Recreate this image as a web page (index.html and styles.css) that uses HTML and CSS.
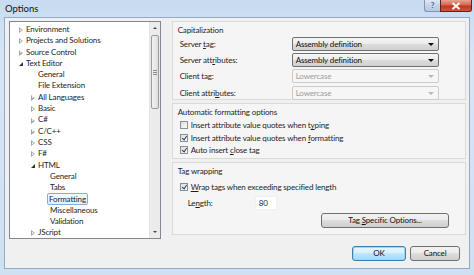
FILE: index.html
```html
<!doctype html>
<html lang="en">

<head>
	<meta charset="utf-8">
	<title>Options</title>
	<link rel="stylesheet" href="styles.css">
</head>

<body>
	<div class="window">
		<div class="titlebar">
			<span class="title">Options</span>
			<div class="caption-buttons">
				<div class="cap-help">?</div>
				<div class="cap-close">
					<svg width="10" height="8" viewBox="0 0 10 8"><path d="M1.5 1 L8.5 7 M8.5 1 L1.5 7" stroke="#fff" stroke-width="2" /></svg>
				</div>
			</div>
		</div>
		<div class="client">
			<div class="main">
				<div class="tree">
					<div class="tree-items">
						<div class="node l0"><span class="tw closed"></span><span>Environment</span></div>
						<div class="node l0"><span class="tw closed"></span><span>Projects and Solutions</span></div>
						<div class="node l0"><span class="tw closed"></span><span>Source Control</span></div>
						<div class="node l0"><span class="tw open"></span><span>Text Editor</span></div>
						<div class="node l1"><span class="tw"></span><span>General</span></div>
						<div class="node l1"><span class="tw"></span><span>File Extension</span></div>
						<div class="node l1"><span class="tw closed"></span><span>All Languages</span></div>
						<div class="node l1"><span class="tw closed"></span><span>Basic</span></div>
						<div class="node l1"><span class="tw closed"></span><span>C#</span></div>
						<div class="node l1"><span class="tw closed"></span><span>C/C++</span></div>
						<div class="node l1"><span class="tw closed"></span><span>CSS</span></div>
						<div class="node l1"><span class="tw closed"></span><span>F#</span></div>
						<div class="node l1"><span class="tw open"></span><span>HTML</span></div>
						<div class="node l2"><span class="tw"></span><span>General</span></div>
						<div class="node l2"><span class="tw"></span><span>Tabs</span></div>
						<div class="node l2"><span class="tw"></span><span class="selected">Formatting</span></div>
						<div class="node l2"><span class="tw"></span><span>Miscellaneous</span></div>
						<div class="node l2"><span class="tw"></span><span>Validation</span></div>
						<div class="node l1"><span class="tw closed"></span><span>JScript</span></div>
					</div>
					<div class="vscroll">
						<div class="sb-arrow up"></div>
						<div class="sb-track">
							<div class="sb-thumb"><span class="grip"></span></div>
						</div>
						<div class="sb-arrow down"></div>
					</div>
				</div>

				<div class="pages">
					<div class="group g-caps">
						<div class="group-head">Capitalization</div>
						<div class="field">
							<span class="label">Server <u>t</u>ag:</span>
							<div class="combo">Assembly definition<span class="arrow"></span></div>
						</div>
						<div class="field">
							<span class="label">Server att<u>r</u>ibutes:</span>
							<div class="combo">Assembly definition<span class="arrow"></span></div>
						</div>
						<div class="field">
							<span class="label">Client tag:</span>
							<div class="combo disabled">Lowercase<span class="arrow"></span></div>
						</div>
						<div class="field">
							<span class="label">Client attri<u>b</u>utes:</span>
							<div class="combo disabled">Lowercase<span class="arrow"></span></div>
						</div>
					</div>

					<div class="group g-auto">
						<div class="group-head">Automatic formatting options</div>
						<div class="check"><span class="box"></span><span>Insert attribute value quotes when t<u>y</u>ping</span></div>
						<div class="check"><span class="box on"></span><span>Insert attribute value quotes when <u>f</u>ormatting</span></div>
						<div class="check"><span class="box on"></span><span>Auto insert <u>c</u>lose tag</span></div>
					</div>

					<div class="group g-wrap">
						<div class="group-head">Tag wrapping</div>
						<div class="check"><span class="box on"></span><span><u>W</u>rap tags when exceeding specified length</span></div>
						<div class="length-row">
							<span class="label">Le<u>n</u>gth:</span>
							<div class="textbox">80</div>
						</div>
						<div class="tag-row">
							<div class="btn wide">Tag <u>S</u>pecific Options...</div>
						</div>
					</div>
				</div>
			</div>

			<div class="footer">
				<div class="btn default">OK</div>
				<div class="btn">Cancel</div>
			</div>
		</div>
	</div>
</body>

</html>
```

FILE: styles.css
```css
html,
body {
	margin: 0;
	padding: 0;
	width: 474px;
	height: 275px;
	overflow: hidden;
	font-family: Lato, "Open Sans", sans-serif;
	font-size: 8px;
	letter-spacing: -0.15px;
	color: #1e1e1e;
}
u {
	text-decoration: underline;
	text-underline-offset: 1px;
}
.window {
	width: 474px;
	height: 275px;
	display: flex;
	flex-direction: column;
	background: linear-gradient(#c7dbf1, #d7e6f5 20%, #cfe0f2);
	box-sizing: border-box;
}
.titlebar {
	height: 17px;
	flex: none;
	display: flex;
	align-items: flex-start;
	justify-content: space-between;
	padding-left: 5px;
	padding-right: 2px;
}
.title {
	font-size: 9.5px;
	line-height: 17px;
	letter-spacing: 0;
	color: #111;
}
.caption-buttons {
	display: flex;
}
.cap-help {
	width: 16px;
	height: 12px;
	box-sizing: border-box;
	border: 1px solid #8096b4;
	border-top: none;
	border-right: none;
	border-radius: 0 0 0 3px;
	background: linear-gradient(#dfe8f3, #c5d5e8 50%, #b4c8e0);
	color: #4e6788;
	font-size: 8px;
	line-height: 11px;
	text-align: center;
	font-weight: bold;
}
.cap-close {
	width: 32px;
	height: 12px;
	box-sizing: border-box;
	border: 1px solid #5a2424;
	border-top: none;
	border-radius: 0 0 3px 0;
	background: linear-gradient(#e8a493, #d6664f 45%, #c3361f 55%, #d2553b);
	display: flex;
	align-items: center;
	justify-content: center;
}
.client {
	flex: 1;
	margin: 0 4px 6px 4px;
	background: #f0f0f0;
	border: 1px solid #93a9c4;
	display: flex;
	flex-direction: column;
}
.main {
	display: flex;
	padding: 3px 3px 0 4px;
	gap: 11px;
}

/* tree */
.tree {
	width: 152px;
	height: 218px;
	box-sizing: border-box;
	border: 1px solid #828790;
	background: #fff;
	display: flex;
	overflow: hidden;
}
.tree-items {
	flex: 1;
	padding-top: 2px;
	overflow: hidden;
}
.node {
	height: 11.3px;
	line-height: 11.3px;
	white-space: nowrap;
	display: flex;
	align-items: center;
}
.node.l0 {
	padding-left: 7px;
}
.node.l1 {
	padding-left: 19px;
}
.node.l2 {
	padding-left: 31px;
}
.tw {
	width: 9px;
	height: 9px;
	flex: none;
	position: relative;
}
.tw.closed::before {
	content: "";
	position: absolute;
	left: 2px;
	top: 2px;
	border-left: 4px solid #a6a6a6;
	border-top: 3px solid transparent;
	border-bottom: 3px solid transparent;
}
.tw.closed::after {
	content: "";
	position: absolute;
	left: 3px;
	top: 3.5px;
	border-left: 2px solid #fff;
	border-top: 1.5px solid transparent;
	border-bottom: 1.5px solid transparent;
}
.tw.open::before {
	content: "";
	position: absolute;
	left: 2px;
	top: 3px;
	border-right: 4px solid #333;
	border-top: 4px solid transparent;
}
.selected {
	border: 1px solid #84acdd;
	border-radius: 2px;
	background: linear-gradient(#f4f9fe, #e4effb);
	padding: 0 1px;
	margin-left: -3px;
	line-height: 10px;
}
.vscroll {
	width: 10px;
	flex: none;
	background: #ebebeb;
	border-left: 1px solid #e3e3e3;
	display: flex;
	flex-direction: column;
}
.sb-arrow {
	height: 12px;
	position: relative;
}
.sb-arrow.up::before,
.sb-arrow.down::before {
	content: "";
	position: absolute;
	left: 3px;
	border-left: 2px solid transparent;
	border-right: 2px solid transparent;
}
.sb-arrow.up::before {
	top: 5px;
	border-bottom: 2px solid #444;
}
.sb-arrow.down::before {
	top: 5px;
	border-top: 2px solid #444;
}
.sb-track {
	flex: 1;
	position: relative;
}
.sb-thumb {
	margin: 1px 1px 0 1px;
	height: 74px;
	box-sizing: border-box;
	border: 1px solid #9b9b9b;
	border-radius: 2px;
	background: linear-gradient(90deg, #f2f2f2, #dedede);
	display: flex;
	align-items: center;
	justify-content: center;
}
.grip {
	width: 4px;
	height: 5px;
	background: repeating-linear-gradient(#8a8a8a 0 1px, transparent 1px 2px);
}

/* property pages */
.pages {
	width: 295px;
	display: flex;
	flex-direction: column;
	gap: 3px;
}
.group {
	border: 1px solid #dadada;
	background: #f5f5f5;
	padding: 2px 0 0 5px;
	box-sizing: border-box;
}
.g-caps {
	height: 79px;
}
.g-auto {
	height: 56px;
}
.g-wrap {
	height: 73px;
}
.group-head {
	line-height: 13px;
	height: 13px;
}
.field {
	display: flex;
	align-items: center;
	height: 14px;
	margin-bottom: 2.2px;
	padding-left: 2px;
}
.field .label {
	width: 112px;
	flex: none;
}
.combo {
	width: 147px;
	height: 14px;
	box-sizing: border-box;
	border: 1px solid #707070;
	border-radius: 2px;
	background: linear-gradient(#f4f4f4, #ebebeb 50%, #dddddd 50%, #d0d0d0);
	padding-left: 3px;
	line-height: 12px;
	position: relative;
	color: #111;
}
.combo .arrow {
	position: absolute;
	right: 4px;
	top: 5px;
	border-left: 3px solid transparent;
	border-right: 3px solid transparent;
	border-top: 3px solid #111;
}
.combo.disabled {
	background: #f6f6f6;
	border-color: #c9cccf;
	color: #9c9c9c;
}
.combo.disabled .arrow {
	border-top-color: #b7b7b7;
}
.check {
	display: flex;
	align-items: center;
	height: 12.4px;
	padding-left: 2px;
	white-space: nowrap;
}
.box {
	width: 8px;
	height: 8px;
	box-sizing: border-box;
	border: 1px solid #8f8f8f;
	background: linear-gradient(135deg, #dcdcdc, #fbfbfb);
	margin-right: 3px;
	position: relative;
	flex: none;
}
.box.on::after {
	content: "";
	position: absolute;
	left: 2px;
	top: 0px;
	width: 2px;
	height: 4px;
	border-right: 1px solid #2e4471;
	border-bottom: 1px solid #2e4471;
	transform: rotate(35deg);
}
.g-auto .check:first-of-type {
	margin-top: 3px;
}
.g-wrap .check {
	margin-top: 3px;
}
.length-row {
	display: flex;
	align-items: center;
	padding-left: 10px;
	margin-top: 2px;
	height: 15px;
}
.length-row .label {
	width: 67px;
}
.textbox {
	width: 22px;
	height: 14px;
	background: #fff;
	border: 1px solid #f0f0f0;
	box-sizing: border-box;
	padding-left: 3px;
	line-height: 12px;
}
.tag-row {
	display: flex;
	justify-content: flex-end;
	padding-right: 16px;
	margin-top: 3px;
}
.btn {
	width: 50px;
	height: 15px;
	box-sizing: border-box;
	border: 1px solid #707070;
	border-radius: 3px;
	background: linear-gradient(#f2f2f2, #ebebeb 50%, #dddddd 50%, #cfcfcf);
	text-align: center;
	line-height: 13px;
	color: #111;
}
.btn.wide {
	width: 128px;
}
.btn.default {
	width: 54px;
	border-color: #3c7fb1;
	box-shadow: inset 0 0 0 1px #9ed6f5;
	background: linear-gradient(#eaf6fd, #d9f0fc 50%, #bee6fd 50%, #a7d9f5);
}
.footer {
	display: flex;
	justify-content: flex-end;
	gap: 4px;
	padding: 7px 9px 0 0;
}
```
